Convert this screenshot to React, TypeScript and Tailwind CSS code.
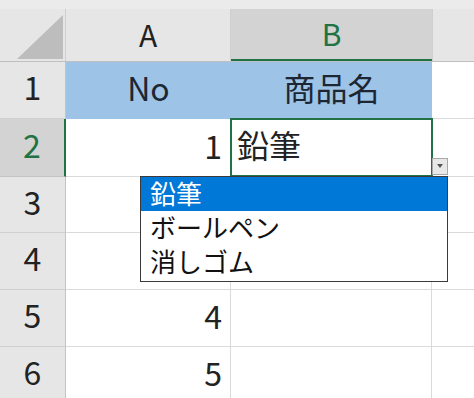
const rows = [
  { n: '1', a: 'No', b: '商品名', head: true },
  { n: '2', a: '1', b: '鉛筆', active: true },
  { n: '3', a: '', b: '' },
  { n: '4', a: '', b: '' },
  { n: '5', a: '4', b: '' },
  { n: '6', a: '5', b: '' },
];

const heights = ['h-[57px]', 'h-[58px]', 'h-[56px]', 'h-[57px]', 'h-[57px]', 'h-[57px]'];

export default function App() {
  return (
    <div className="relative w-[474px] h-[398px] overflow-hidden bg-white font-['Noto_Sans_CJK_JP','Noto_Sans',sans-serif] text-[#222] leading-none">
      {/* column headers */}
      <div className="h-[9px] bg-[#ebebeb]" />
      <div className="flex h-[53px] border-b border-[#bfbfbf]">
        <div className="w-[66px] shrink-0 bg-[#e6e6e6] border-r border-[#cfcfcf] relative">
          <svg className="absolute left-0 top-0" width="66" height="53" viewBox="0 0 66 53">
            <polygon points="17,50 63,50 63,6" fill="#bdbdbd" />
          </svg>
        </div>
        <div className="w-[165px] shrink-0 bg-[#e6e6e6] border-r border-[#cfcfcf] flex items-center justify-center pb-[2px] text-[30px]">
          A
        </div>
        <div className="w-[201px] shrink-0 bg-[#d3d3d3] border-b-2 border-[#217346] flex items-center justify-center pb-[2px] text-[30px] text-[#217346]">
          B
        </div>
        <div className="flex-1 bg-[#e6e6e6] border-l border-[#cfcfcf]" />
      </div>

      {rows.map((r, i) => (
        <div key={r.n} className={`flex ${heights[i]}`}>
          <div
            className={
              r.active
                ? 'w-[66px] shrink-0 bg-[#d3d3d3] border-r-2 border-r-[#217346] border-b border-b-[#c4c4c4] flex items-center justify-center pb-[8px] text-[32px] text-[#217346]'
                : 'w-[66px] shrink-0 bg-[#e6e6e6] border-r border-r-[#c4c4c4] border-b border-b-[#cfcfcf] flex items-center justify-center pb-[8px] text-[32px]'
            }
          >
            {r.n}
          </div>
          <div
            className={
              r.head
                ? 'w-[165px] shrink-0 bg-[#9dc3e6] flex items-center justify-center pb-[8px] text-[32px] text-[#1c2733]'
                : 'w-[165px] shrink-0 border-r border-b border-[#dadada] flex items-center justify-end pr-[8px] pb-[6px] text-[32px]'
            }
          >
            {r.a}
          </div>
          <div
            className={
              r.head
                ? 'w-[201px] shrink-0 bg-[#9dc3e6] flex items-center justify-center pb-[8px] text-[32px] text-[#1c2733]'
                : 'relative w-[201px] shrink-0 border-r border-b border-[#dadada] flex items-center pl-[6px] pb-[8px] text-[32px]'
            }
          >
            {r.b}
            {r.active && (
              <div className="absolute -left-px -top-px w-[203px] h-[59px] border-2 border-[#217346]" />
            )}
          </div>
          <div className="flex-1 border-b border-[#dadada]" />
        </div>
      ))}

      {/* dropdown button */}
      <div className="absolute left-[432px] top-[158px] w-[16px] h-[17px] bg-[#e8e8e8] border border-[#a8a8a8] flex items-center justify-center">
        <svg width="8" height="5" viewBox="0 0 8 5">
          <polygon points="1,0 7,0 4,4" fill="#555" />
        </svg>
      </div>

      {/* dropdown list */}
      <div className="absolute left-[140px] top-[176px] w-[308px] h-[106px] bg-white border border-[#3a3a3a] text-[26px] text-[#111]">
        <div className="h-[34px] bg-[#0078d7] text-white flex items-center pl-[9px] pb-[3px]">鉛筆</div>
        <div className="h-[34px] flex items-center pl-[9px] pb-[3px]">ボールペン</div>
        <div className="h-[34px] flex items-center pl-[9px] pb-[3px]">消しゴム</div>
      </div>
    </div>
  );
}
